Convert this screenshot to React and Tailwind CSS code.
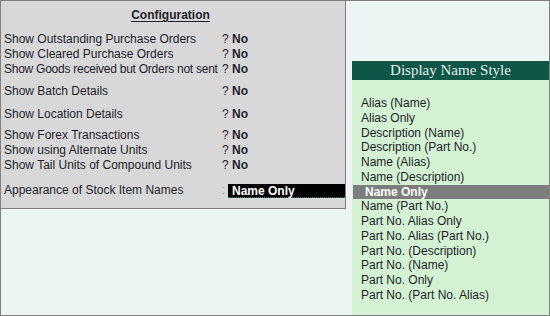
const rows = [
  { label: 'Show Outstanding Purchase Orders', value: 'No' },
  { label: 'Show Cleared Purchase Orders', value: 'No' },
  { label: 'Show Goods received but Orders not sent', value: 'No', tight: true },
  { label: 'Show Batch Details', value: 'No', gap: 'mt-[7px]' },
  { label: 'Show Location Details', value: 'No', gap: 'mt-[8px]' },
  { label: 'Show Forex Transactions', value: 'No', gap: 'mt-[6px]' },
  { label: 'Show using Alternate Units', value: 'No' },
  { label: 'Show Tail Units of Compound Units', value: 'No' },
]

const styles = [
  'Alias (Name)',
  'Alias Only',
  'Description (Name)',
  'Description (Part No.)',
  'Name (Alias)',
  'Name (Description)',
  'Name Only',
  'Name (Part No.)',
  'Part No. Alias Only',
  'Part No. Alias (Part No.)',
  'Part No. (Description)',
  'Part No. (Name)',
  'Part No. Only',
  'Part No. (Part No. Alias)',
]

export default function App() {
  const selected = 'Name Only'

  return (
    <div className="w-[550px] h-[316px] flex border border-[#808080] bg-[#ecf5f3] text-[12px] text-[#1e1e2a] font-['Liberation_Sans',Arial,sans-serif] overflow-hidden">
      {/* left: configuration panel */}
      <div className="w-[345px] shrink-0">
        <div className="h-[208px] bg-[#d8d8d8] border-r border-b border-[#808080] pt-[7px] pl-[3px]">
          <div className="flex justify-center pr-[8px] leading-[15px]">
            <span className="font-bold underline underline-offset-2">Configuration</span>
          </div>
          <div className="mt-[9px] leading-[15px]">
            {rows.map(r => (
              <div key={r.label} className={`flex ${r.gap || ''}`}>
                <span className={`w-[218px] whitespace-nowrap ${r.tight ? 'tracking-[-0.25px]' : ''}`}>{r.label}</span>
                <span className="w-[10px]">?</span>
                <span className="font-bold">{r.value}</span>
              </div>
            ))}
            <div className="flex items-center mt-[10px]">
              <span className="w-[218px] whitespace-nowrap">Appearance of Stock Item Names</span>
              <span className="w-[6px] text-[#999]">:</span>
              <span className="flex-1 h-[14px] leading-[14px] bg-black text-white font-bold pl-[4px] border-b border-dotted border-[#2a8a8a]">Name Only</span>
            </div>
          </div>
        </div>
      </div>

      {/* right: display name style list */}
      <div className="flex-1 pt-[60px] pl-[6px] flex flex-col">
        <div className="flex-1 flex flex-col bg-[#d4f1d4]">
          <div className="h-[19px] bg-[#0f5548] text-[#e6f2ea] text-center leading-[19px] text-[15px] font-['Liberation_Serif','Times_New_Roman',serif]">
            Display Name Style
          </div>
          <div className="pt-[16px] leading-[14.77px]">
            {styles.map(s => (
              s === selected ? (
                <div key={s} className="ml-[1px] pl-[12px] bg-[#7d7d7d] text-white font-bold">{s}</div>
              ) : (
                <div key={s} className="pl-[9px] whitespace-nowrap">{s}</div>
              )
            ))}
          </div>
        </div>
      </div>
    </div>
  )
}
